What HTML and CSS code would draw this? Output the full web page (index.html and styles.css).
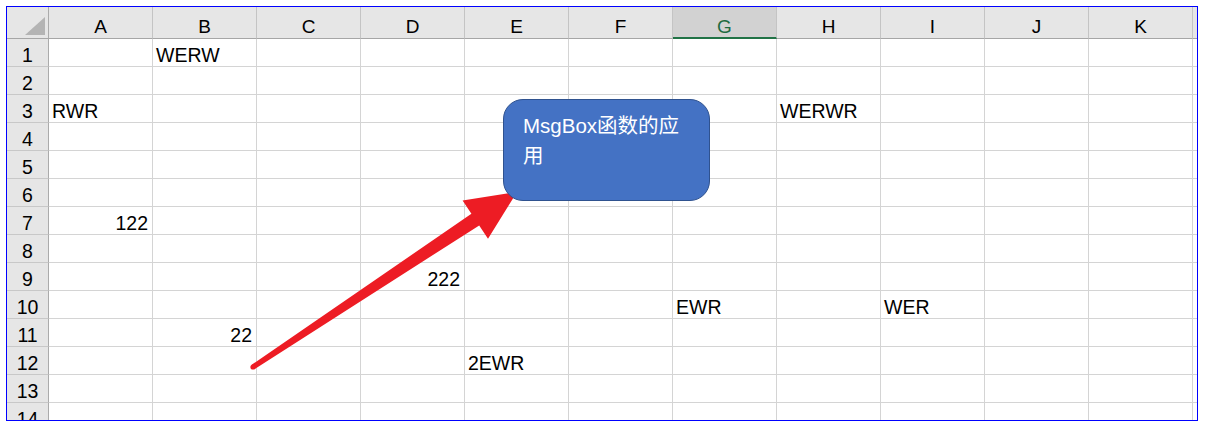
FILE: index.html
```html
<!DOCTYPE html>
<html lang="zh">
<head>
<meta charset="utf-8">
<title>Sheet</title>
<link rel="stylesheet" href="styles.css">
</head>
<body>
<div class="sheet">
  <div class="grid">
    <div class="corner"><svg class="tri" width="41" height="31" viewBox="0 0 41 31"><polygon points="18,28 38,28 38,10" fill="#b4b4b4"/></svg></div>
    <div class="ch">A</div><div class="ch">B</div><div class="ch">C</div><div class="ch">D</div><div class="ch">E</div><div class="ch">F</div><div class="ch sel">G</div><div class="ch">H</div><div class="ch">I</div><div class="ch">J</div><div class="ch">K</div><div class="ch fill"></div>

    <div class="rh">1</div><div class="c"></div><div class="c">WERW</div><div class="c"></div><div class="c"></div><div class="c"></div><div class="c"></div><div class="c"></div><div class="c"></div><div class="c"></div><div class="c"></div><div class="c"></div><div class="f"></div>
    <div class="rh">2</div><div class="c"></div><div class="c"></div><div class="c"></div><div class="c"></div><div class="c"></div><div class="c"></div><div class="c"></div><div class="c"></div><div class="c"></div><div class="c"></div><div class="c"></div><div class="f"></div>
    <div class="rh">3</div><div class="c">RWR</div><div class="c"></div><div class="c"></div><div class="c"></div><div class="c"></div><div class="c"></div><div class="c"></div><div class="c">WERWR</div><div class="c"></div><div class="c"></div><div class="c"></div><div class="f"></div>
    <div class="rh">4</div><div class="c"></div><div class="c"></div><div class="c"></div><div class="c"></div><div class="c"></div><div class="c"></div><div class="c"></div><div class="c"></div><div class="c"></div><div class="c"></div><div class="c"></div><div class="f"></div>
    <div class="rh">5</div><div class="c"></div><div class="c"></div><div class="c"></div><div class="c"></div><div class="c"></div><div class="c"></div><div class="c"></div><div class="c"></div><div class="c"></div><div class="c"></div><div class="c"></div><div class="f"></div>
    <div class="rh">6</div><div class="c"></div><div class="c"></div><div class="c"></div><div class="c"></div><div class="c"></div><div class="c"></div><div class="c"></div><div class="c"></div><div class="c"></div><div class="c"></div><div class="c"></div><div class="f"></div>
    <div class="rh">7</div><div class="c num">122</div><div class="c"></div><div class="c"></div><div class="c"></div><div class="c"></div><div class="c"></div><div class="c"></div><div class="c"></div><div class="c"></div><div class="c"></div><div class="c"></div><div class="f"></div>
    <div class="rh">8</div><div class="c"></div><div class="c"></div><div class="c"></div><div class="c"></div><div class="c"></div><div class="c"></div><div class="c"></div><div class="c"></div><div class="c"></div><div class="c"></div><div class="c"></div><div class="f"></div>
    <div class="rh">9</div><div class="c"></div><div class="c"></div><div class="c"></div><div class="c num">222</div><div class="c"></div><div class="c"></div><div class="c"></div><div class="c"></div><div class="c"></div><div class="c"></div><div class="c"></div><div class="f"></div>
    <div class="rh">10</div><div class="c"></div><div class="c"></div><div class="c"></div><div class="c"></div><div class="c"></div><div class="c"></div><div class="c">EWR</div><div class="c"></div><div class="c">WER</div><div class="c"></div><div class="c"></div><div class="f"></div>
    <div class="rh">11</div><div class="c"></div><div class="c num">22</div><div class="c"></div><div class="c"></div><div class="c"></div><div class="c"></div><div class="c"></div><div class="c"></div><div class="c"></div><div class="c"></div><div class="c"></div><div class="f"></div>
    <div class="rh">12</div><div class="c"></div><div class="c"></div><div class="c"></div><div class="c"></div><div class="c">2EWR</div><div class="c"></div><div class="c"></div><div class="c"></div><div class="c"></div><div class="c"></div><div class="c"></div><div class="f"></div>
    <div class="rh">13</div><div class="c"></div><div class="c"></div><div class="c"></div><div class="c"></div><div class="c"></div><div class="c"></div><div class="c"></div><div class="c"></div><div class="c"></div><div class="c"></div><div class="c"></div><div class="f"></div>
    <div class="rh">14</div><div class="c"></div><div class="c"></div><div class="c"></div><div class="c"></div><div class="c"></div><div class="c"></div><div class="c"></div><div class="c"></div><div class="c"></div><div class="c"></div><div class="c"></div><div class="f"></div>
  </div>
  <svg class="arrow" width="1190" height="413" viewBox="7 7 1190 413">
    <polygon points="251.6,364.8 471.4,213.8 462.6,200.4 517,192 488,238.8 479.2,225.4 254.4,369.2" fill="#ed1c24"/>
    <circle cx="253" cy="367" r="2.6" fill="#ed1c24"/>
  </svg>
  <div class="callout">MsgBox函数的应用</div>
</div>
</body>
</html>
```
FILE: styles.css
```css
html, body {
  margin: 0;
  padding: 0;
  background: #ffffff;
}

.sheet {
  position: relative;
  box-sizing: border-box;
  margin: 6px 0 0 6px;
  width: 1192px;
  height: 415px;
  border: 1px solid #0000ff;
  overflow: hidden;
  font-family: "Liberation Sans", "Noto Sans CJK SC", sans-serif;
  font-size: 19px;
  color: #000;
}

.grid {
  display: grid;
  grid-template-columns: 42px repeat(11, 104px) 4px;
  grid-template-rows: 32px repeat(14, 28px);
}

.corner,
.ch {
  box-sizing: border-box;
  background: #e6e6e6;
  border-bottom: 1px solid #a6a6a6;
  border-right: 1px solid #c4c4c4;
}

.corner {
  border-right-color: #ababab;
}

.tri {
  display: block;
}

.ch {
  text-align: center;
  padding-top: 5px;
  line-height: 30px;
  overflow: hidden;
}

.ch.sel {
  background: #d2d2d2;
  color: #1e6b41;
  border-bottom: 2px solid #217346;
}

.ch.fill {
  border-right: none;
}

.rh {
  box-sizing: border-box;
  background: #e6e6e6;
  border-right: 1px solid #ababab;
  border-bottom: 1px solid #c8c8c8;
  text-align: center;
  font-size: 19.5px;
  line-height: 33px;
  overflow: hidden;
}

.c {
  box-sizing: border-box;
  border-right: 1px solid #d4d4d4;
  border-bottom: 1px solid #d4d4d4;
  padding: 0 4px 0 3px;
  font-size: 19.5px;
  line-height: 32px;
  white-space: nowrap;
}

.c.num {
  text-align: right;
}

.f {
  border-bottom: 1px solid #d4d4d4;
}

.arrow {
  position: absolute;
  left: 0;
  top: 0;
  z-index: 1;
}

.callout {
  position: absolute;
  left: 496px;
  top: 92px;
  z-index: 2;
  box-sizing: border-box;
  width: 207px;
  height: 102px;
  padding: 11px 20px 0 19px;
  background: #4472c4;
  border: 1.5px solid #2f528f;
  border-radius: 20px;
  color: #ffffff;
  font-size: 20.5px;
  line-height: 30px;
}
```
